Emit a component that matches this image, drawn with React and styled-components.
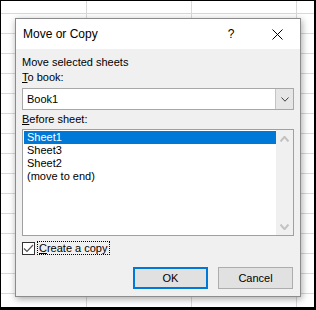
import React from "react";
import styled, { createGlobalStyle } from "styled-components";

const GlobalStyle = createGlobalStyle`
  body {
    margin: 0;
    font-family: "Segoe UI", "Liberation Sans", Arial, sans-serif;
    color: #000;
  }
`;

const sheets = ["Sheet1", "Sheet3", "Sheet2", "(move to end)"];

const Chevron = ({ up, color, w = 8, h = 5, sw = 1 }) => (
  <svg width={w} height={h} viewBox={`0 0 ${w} ${h}`}>
    <path
      d={up ? `M0.5 ${h - 0.5} L${w / 2} 0.8 L${w - 0.5} ${h - 0.5}` : `M0.5 0.5 L${w / 2} ${h - 0.8} L${w - 0.5} 0.5`}
      fill="none"
      stroke={color}
      strokeWidth={sw}
    />
  </svg>
);

const App = () => {
  return (
    <Screen>
      <GlobalStyle />
      <Dialog>
        <TitleBar>
          <Title>Move or Copy</Title>
          <TitleButton>?</TitleButton>
          <TitleButton>
            <svg width="11" height="11" viewBox="0 0 11 11">
              <path d="M0.5 0.5 L10.5 10.5 M10.5 0.5 L0.5 10.5" stroke="#000" strokeWidth="1" />
            </svg>
          </TitleButton>
        </TitleBar>
        <Body>
          <Label>Move selected sheets</Label>
          <Label>
            <u>T</u>o book:
          </Label>
          <ComboBox>
            <ComboText>Book1</ComboText>
            <ComboButton>
              <Chevron color="#404040" w={8} h={5} sw={1} />
            </ComboButton>
          </ComboBox>
          <Label $gap={2}>
            <u>B</u>efore sheet:
          </Label>
          <ListBox>
            <Rows>
              {sheets.map((s, i) => (
                <Row key={s} $selected={i === 0}>
                  {s}
                </Row>
              ))}
            </Rows>
            <ScrollBar>
              <ScrollArrow>
                <Chevron up color="#c2c2c2" w={9} h={6} sw={2} />
              </ScrollArrow>
              <ScrollArrow>
                <Chevron color="#c2c2c2" w={9} h={6} sw={2} />
              </ScrollArrow>
            </ScrollBar>
          </ListBox>
          <CheckRow>
            <CheckBox>
              <svg width="11" height="11" viewBox="0 0 11 11">
                <path d="M1 5.5 L4 8.5 L10 2" fill="none" stroke="#555" strokeWidth="1.2" />
              </svg>
            </CheckBox>
            <FocusLabel>
              <u>C</u>reate a copy
            </FocusLabel>
          </CheckRow>
          <ButtonRow>
            <Button $primary>OK</Button>
            <Button>Cancel</Button>
          </ButtonRow>
        </Body>
      </Dialog>
    </Screen>
  );
};

const Screen = styled.div`
  position: relative;
  width: 316px;
  height: 310px;
  box-sizing: border-box;
  border-style: solid;
  border-color: #000;
  border-width: 1px 2px 3px 1px;
  background-color: #fff;
  background-image: linear-gradient(to right, transparent 104px, #d9d9d9 104px),
    linear-gradient(to bottom, transparent 19px, #d9d9d9 19px);
  background-size: 105px 100%, 100% 20px;
  background-position: -19px 0, 0 -7px;
  overflow: hidden;
`;

const Dialog = styled.div`
  position: absolute;
  left: 14px;
  top: 17px;
  width: 286px;
  height: 279px;
  box-sizing: border-box;
  border: 1px solid #8c8c8c;
  background: #f0f0f0;
  box-shadow: 1px 2px 7px rgba(0, 0, 0, 0.35);
  display: flex;
  flex-direction: column;
`;

const TitleBar = styled.div`
  height: 30px;
  flex: none;
  background: #fff;
  display: flex;
  align-items: center;
  padding-left: 7px;
`;

const Title = styled.div`
  flex: 1;
  font-size: 12px;
`;

const TitleButton = styled.div`
  width: 46px;
  height: 30px;
  display: flex;
  align-items: center;
  justify-content: center;
  font-size: 12px;
`;

const Body = styled.div`
  flex: 1;
  display: flex;
  flex-direction: column;
  padding: 6px 6px 7px 6px;
  font-size: 11px;
`;

const Label = styled.div`
  height: 15px;
  line-height: 15px;
  margin-top: ${(p) => p.$gap || 0}px;
  white-space: nowrap;
`;

const ComboBox = styled.div`
  margin-top: 3px;
  height: 22px;
  box-sizing: border-box;
  border: 1px solid #a8a8a8;
  background: #fff;
  display: flex;
`;

const ComboText = styled.div`
  flex: 1;
  padding-left: 4px;
  line-height: 20px;
`;

const ComboButton = styled.div`
  width: 17px;
  background: #e6e6e6;
  border-left: 1px solid #c4c4c4;
  display: flex;
  align-items: center;
  justify-content: center;
`;

const ListBox = styled.div`
  margin-top: 2px;
  height: 107px;
  box-sizing: border-box;
  border: 1px solid #a0a0a0;
  background: #fff;
  display: flex;
`;

const Rows = styled.div`
  flex: 1;
  padding: 1px 0 0 1px;
`;

const Row = styled.div`
  height: 13px;
  line-height: 13px;
  padding-left: 3px;
  white-space: nowrap;
  background: ${(p) => (p.$selected ? "#0078d7" : "transparent")};
  color: ${(p) => (p.$selected ? "#fff" : "#000")};
`;

const ScrollBar = styled.div`
  width: 17px;
  background: #f0f0f0;
  display: flex;
  flex-direction: column;
  justify-content: space-between;
`;

const ScrollArrow = styled.div`
  height: 17px;
  display: flex;
  align-items: center;
  justify-content: center;
`;

const CheckRow = styled.div`
  margin-top: 5px;
  height: 14px;
  display: flex;
  align-items: center;
`;

const CheckBox = styled.div`
  width: 13px;
  height: 13px;
  box-sizing: border-box;
  border: 1px solid #333;
  background: #fff;
  margin-right: 2px;
  display: flex;
  align-items: center;
  justify-content: center;
`;

const FocusLabel = styled.div`
  border: 1px dotted #000;
  padding: 0 1px;
  line-height: 12px;
  white-space: nowrap;
`;

const ButtonRow = styled.div`
  margin-top: 12px;
  display: flex;
  justify-content: flex-end;
  gap: 10px;
  padding-right: 1px;
`;

const Button = styled.div`
  width: 75px;
  height: 22px;
  box-sizing: border-box;
  background: #e1e1e1;
  border: ${(p) => (p.$primary ? "2px solid #0078d7" : "1px solid #adadad")};
  display: flex;
  align-items: center;
  justify-content: center;
  font-size: 11px;
`;

export default App;
